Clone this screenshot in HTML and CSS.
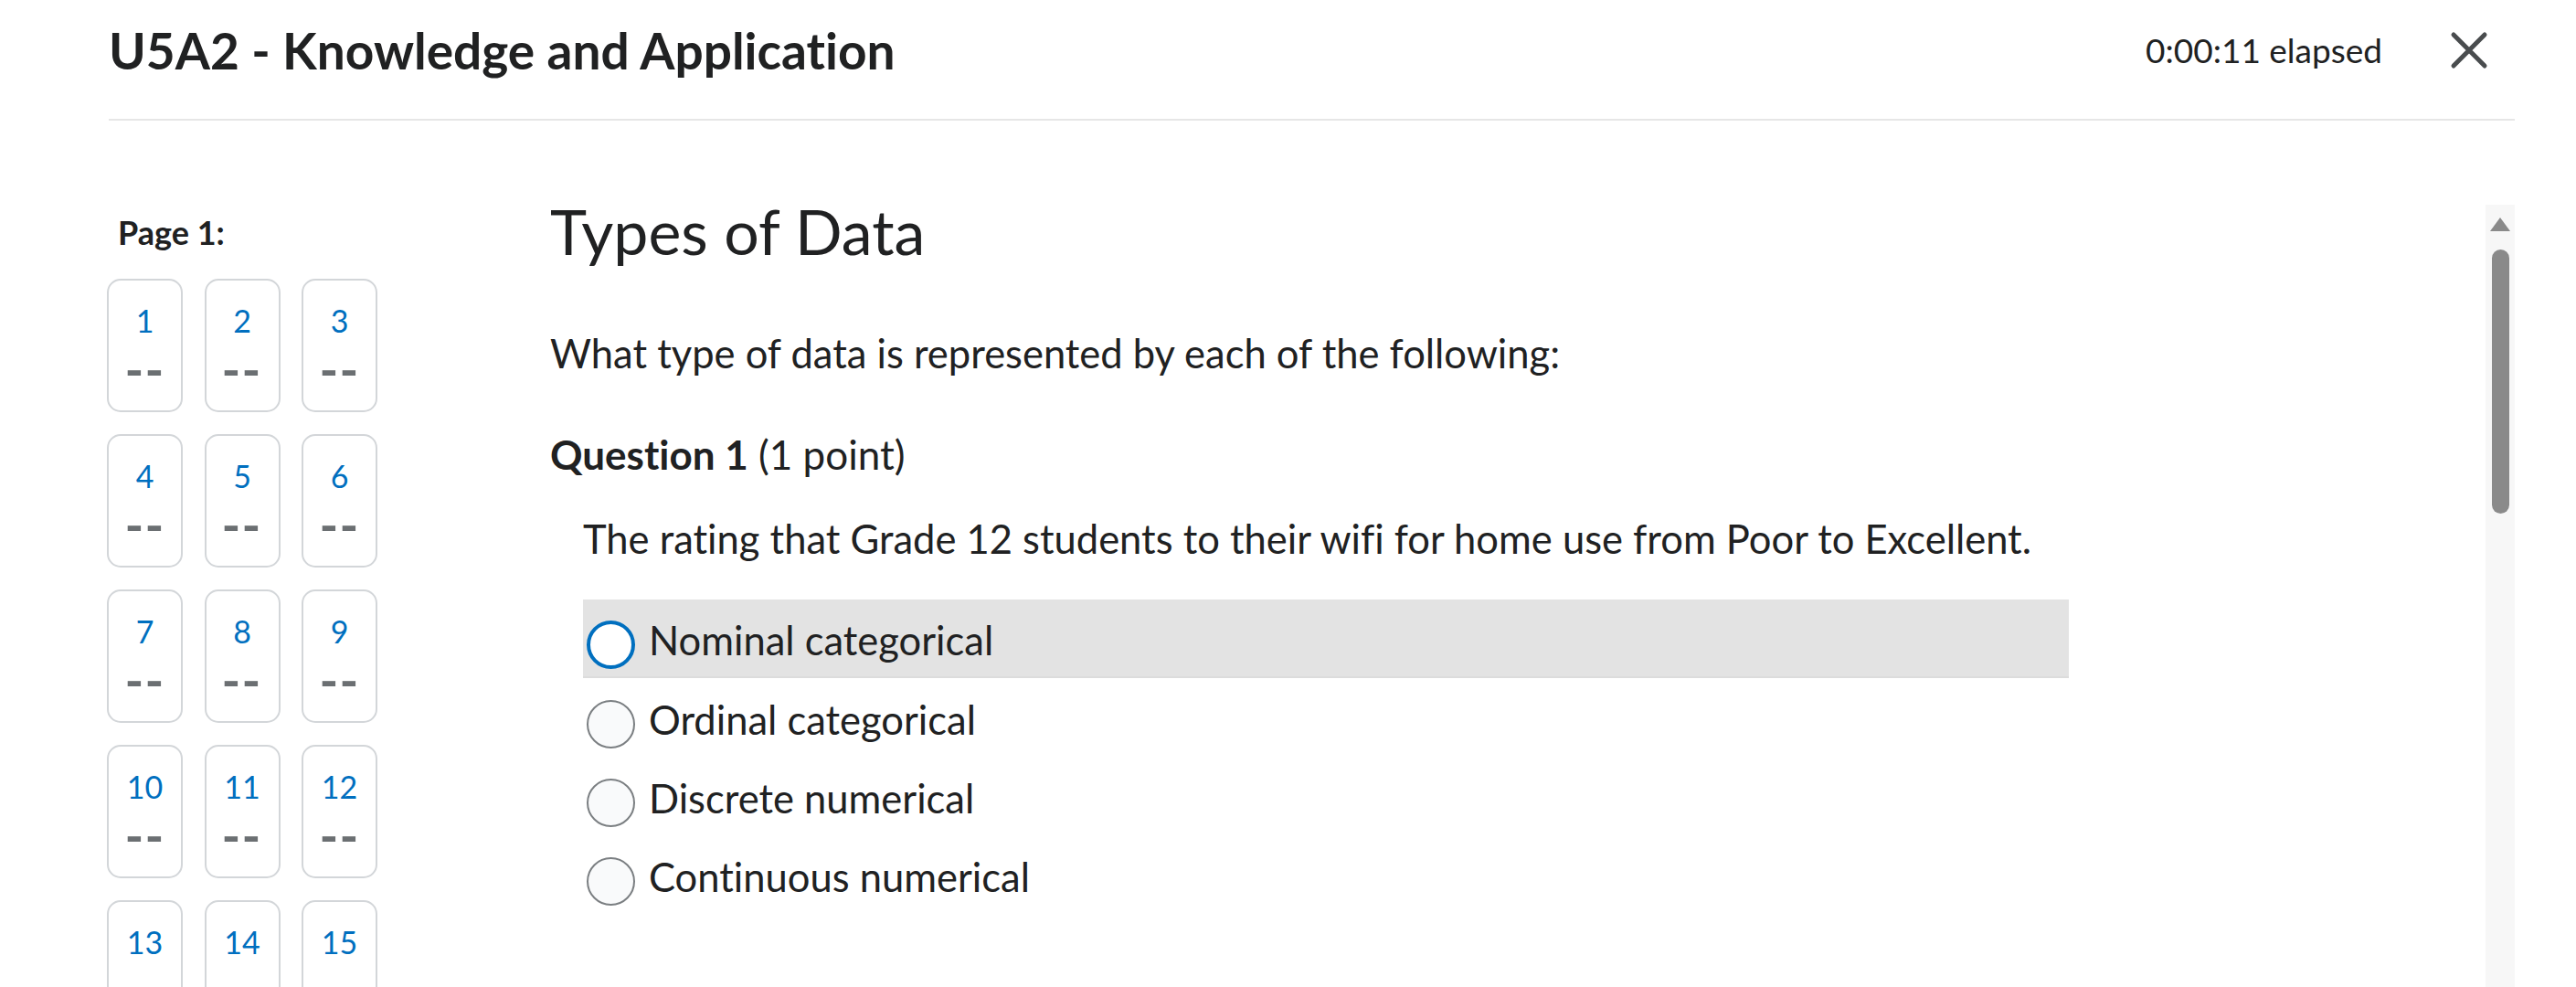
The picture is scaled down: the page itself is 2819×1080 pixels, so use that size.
FILE: index.html
```html
<!DOCTYPE html>
<html lang="en">
<head>
<meta charset="utf-8">
<title>U5A2 - Knowledge and Application</title>
<link rel="stylesheet" href="styles.css">
</head>
<body>
<header class="header">
  <h1 class="title">U5A2 - Knowledge and Application</h1>
  <div class="timer">0:00:11 elapsed</div>
  <button class="close" aria-label="Close">
    <svg width="44" height="44" viewBox="0 0 44 44"><path d="M5 5 L39 39 M39 5 L5 39" stroke="#494c4e" stroke-width="5" stroke-linecap="round" fill="none"/></svg>
  </button>
</header>
<div class="main">
  <nav class="nav">
    <div class="page-label">Page 1:</div>
    <div class="tiles">
      <a class="tile"><span class="num">1</span><span class="dash">--</span></a>
      <a class="tile"><span class="num">2</span><span class="dash">--</span></a>
      <a class="tile"><span class="num">3</span><span class="dash">--</span></a>
      <a class="tile"><span class="num">4</span><span class="dash">--</span></a>
      <a class="tile"><span class="num">5</span><span class="dash">--</span></a>
      <a class="tile"><span class="num">6</span><span class="dash">--</span></a>
      <a class="tile"><span class="num">7</span><span class="dash">--</span></a>
      <a class="tile"><span class="num">8</span><span class="dash">--</span></a>
      <a class="tile"><span class="num">9</span><span class="dash">--</span></a>
      <a class="tile"><span class="num">10</span><span class="dash">--</span></a>
      <a class="tile"><span class="num">11</span><span class="dash">--</span></a>
      <a class="tile"><span class="num">12</span><span class="dash">--</span></a>
      <a class="tile"><span class="num">13</span><span class="dash">--</span></a>
      <a class="tile"><span class="num">14</span><span class="dash">--</span></a>
      <a class="tile"><span class="num">15</span><span class="dash">--</span></a>
    </div>
  </nav>
  <section class="content">
    <h2 class="section-title">Types of Data</h2>
    <p class="intro">What type of data is represented by each of the following:</p>
    <div class="question-head"><strong>Question 1</strong> (1 point)</div>
    <div class="question-body">
      <p class="prompt">The rating that Grade 12 students to their wifi for home use from Poor to Excellent.</p>
      <div class="options">
        <label class="option hover"><span class="radio focus"></span><span class="opt-text">Nominal categorical</span></label>
        <label class="option"><span class="radio"></span><span class="opt-text">Ordinal categorical</span></label>
        <label class="option"><span class="radio"></span><span class="opt-text">Discrete numerical</span></label>
        <label class="option"><span class="radio"></span><span class="opt-text">Continuous numerical</span></label>
      </div>
    </div>
  </section>
  <div class="scrollbar">
    <div class="arrow"></div>
    <div class="thumb"></div>
  </div>
</div>
</body>
</html>
```

FILE: styles.css
```css
html, body {
  margin: 0;
  padding: 0;
  background: #ffffff;
  font-family: Lato, "Noto Sans", sans-serif;
  color: #202122;
  overflow: hidden;
  font-variant-ligatures: none;
}

.header {
  height: 132px;
  box-sizing: border-box;
  padding-bottom: 20px;
  margin: 0 67px 0 119px;
  display: flex;
  align-items: center;
  border-bottom: 2px solid #e6e6e6;
}

.title {
  margin: 0;
  font-size: 55px;
  font-weight: 700;
  line-height: 64px;
  color: #202122;
  flex: 1;
}

.timer {
  font-size: 37px;
  line-height: 44px;
  color: #202122;
}

.close {
  margin-left: 73px;
  margin-right: 28px;
  padding: 0;
  border: 0;
  background: none;
  width: 44px;
  height: 44px;
  display: flex;
}

.main {
  display: flex;
  height: 948px;
}

.nav {
  margin-left: 117px;
  width: 297px;
  flex: none;
}

.page-label {
  margin-top: 101px;
  margin-left: 12px;
  font-size: 36px;
  font-weight: 700;
  line-height: 42px;
}

.tiles {
  margin-top: 30px;
  display: grid;
  grid-template-columns: repeat(3, 83px);
  column-gap: 23.5px;
  row-gap: 24px;
}

.tile {
  height: 146px;
  box-sizing: border-box;
  border: 2px solid #d3d6d9;
  border-radius: 15px;
  display: flex;
  flex-direction: column;
  align-items: center;
}

.num {
  margin-top: 21px;
  font-size: 34px;
  line-height: 46px;
  color: #006fbf;
}

.dash {
  display: inline-block;
  margin-top: 10px;
  font-size: 34px;
  line-height: 40px;
  font-weight: 900;
  color: #6b6f72;
  letter-spacing: 1px;
  transform: scale(1.6, 1.5);
}

.content {
  margin-left: 188px;
  flex: 1;
}

.section-title {
  margin: 79px 0 0 0;
  font-size: 68px;
  font-weight: 400;
  line-height: 84px;
}

.intro {
  margin: 61px 0 0 0;
  font-size: 43.5px;
  line-height: 60px;
}

.question-head {
  margin-top: 51px;
  font-size: 44px;
  line-height: 60px;
}

.question-head strong {
  font-weight: 700;
}

.question-body {
  margin-left: 36px;
  width: 1626px;
}

.prompt {
  margin: 32px 0 0 0;
  font-size: 43.5px;
  line-height: 60px;
}

.options {
  margin-top: 37px;
}

.option {
  height: 86px;
  box-sizing: border-box;
  display: flex;
  align-items: center;
  padding-left: 4px;
}

.option.hover {
  background: #e3e3e3;
  border-bottom: 2px solid #dcdcdc;
}

.radio {
  width: 53px;
  height: 53px;
  box-sizing: border-box;
  border-radius: 50%;
  border: 2px solid #7b7f82;
  background: #f9fafb;
  margin-top: 14px;
  flex: none;
}

.radio.focus {
  border: 4px solid #006fbf;
  background: #ffffff;
}

.opt-text {
  margin-left: 15px;
  font-size: 43.5px;
  line-height: 60px;
  margin-top: 4px;
}

.scrollbar {
  width: 32px;
  margin-left: auto;
  margin-right: 67px;
  margin-top: 92px;
  background: #f7f7f7;
  display: flex;
  flex-direction: column;
  align-items: center;
}

.arrow {
  margin-top: 14px;
  width: 0;
  height: 0;
  border-left: 11px solid transparent;
  border-right: 11px solid transparent;
  border-bottom: 15px solid #8a8a8a;
}

.thumb {
  margin-top: 20px;
  width: 19px;
  height: 289px;
  border-radius: 10px;
  background: #8a8a8a;
}
```
